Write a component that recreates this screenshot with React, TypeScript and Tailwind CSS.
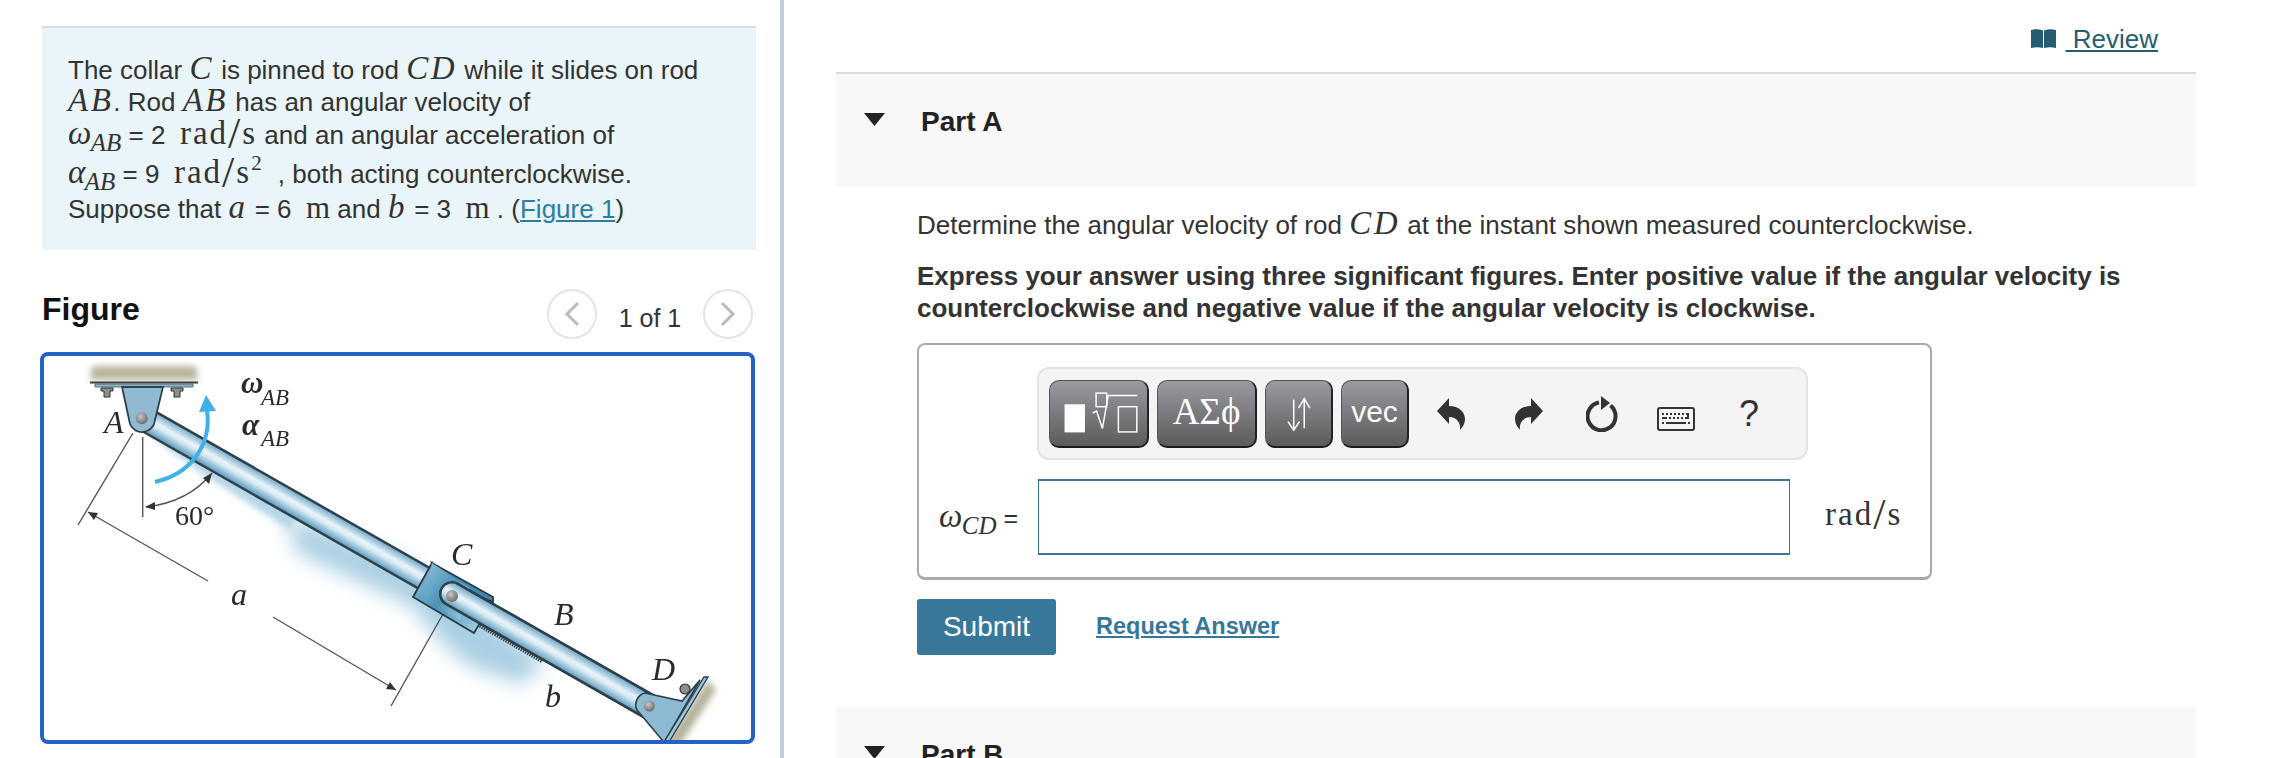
import React from 'react';

const sans = "font-['Liberation_Sans',Arial,sans-serif]";

function I({ children }: { children: React.ReactNode }) {
  return <span className="font-['Liberation_Serif',serif] italic text-[33px] tracking-[2.5px]">{children}</span>;
}

function Sub({ children }: { children: React.ReactNode }) {
  return <span className="font-['Liberation_Serif',serif] italic text-[25px] leading-[0] align-[-7px] -ml-[3px]">{children}</span>;
}

function Unit({ sup }: { sup?: boolean }) {
  return (
    <span className="font-['Liberation_Serif',serif] text-[33px] tracking-[2px]">
      rad<span className="text-[44px] font-light leading-[0] align-[-4px]">/</span>s
      {sup && <span className="text-[21px] leading-[0] align-[13px] mr-[7px]">2</span>}
    </span>
  );
}

function Triangle() {
  return (
    <svg width="21" height="13" viewBox="0 0 21 13" className="shrink-0">
      <path d="M0 0H21L10.5 13Z" fill="#222" />
    </svg>
  );
}

function PartHeader({ label, className }: { label: string; className: string }) {
  return (
    <div className={`bg-[#f8f8f8] flex items-start pl-[28px] ${className}`}>
      <div className="pt-[39px]"><Triangle /></div>
      <div className="ml-[36px] pt-[31px] text-[28px] leading-[34px] font-bold text-[#222]">{label}</div>
    </div>
  );
}

function Figure() {
  return (
    <svg width="707" height="384" viewBox="44 356 707 384" className="block">
      <defs>
        <linearGradient id="rod" gradientUnits="userSpaceOnUse" x1="401.2" y1="552.9" x2="390.8" y2="571.1">
          <stop offset="0" stop-color="#78aeca" />
          <stop offset="0.42" stop-color="#e8f4fa" />
          <stop offset="0.6" stop-color="#d6eaf4" />
          <stop offset="1" stop-color="#6ba3c3" />
        </linearGradient>
        <linearGradient id="collar" x1="0" y1="0" x2="1" y2="1">
          <stop offset="0" stop-color="#8fc3da" />
          <stop offset="0.5" stop-color="#4b93b6" />
          <stop offset="1" stop-color="#a9d2e4" />
        </linearGradient>
        <radialGradient id="pin" cx="0.4" cy="0.35" r="0.7">
          <stop offset="0" stop-color="#c8c8c8" />
          <stop offset="1" stop-color="#666" />
        </radialGradient>
        <filter id="soft" x="-30%" y="-30%" width="160%" height="160%"><feGaussianBlur stdDeviation="10" /></filter>
        <filter id="softer" x="-30%" y="-30%" width="160%" height="160%"><feGaussianBlur stdDeviation="3" /></filter>
        <filter id="ink" x="-5%" y="-5%" width="110%" height="110%"><feGaussianBlur stdDeviation="0.5" /></filter>
      </defs>

      {/* shadows */}
      <path d="M285 515L298 553L360 582L412 606L440 640L469 666L521 684L545 663L480 610L400 560Z" fill="#a9cfe2" filter="url(#soft)" />
      <path d="M150 436L200 472L290 530L300 510L200 450Z" fill="#b5d6e7" filter="url(#softer)" />
      <path d="M92 366H196L198 380H90Z" fill="#b9b59f" filter="url(#softer)" />
      <path d="M708 680L716 690L680 745L664 745Z" fill="#b4b29a" filter="url(#softer)" />

      <g filter="url(#ink)">
        {/* dimension lines */}
        <g stroke="#555" stroke-width="1.4" fill="none">
          <path d="M133 433L78 525" />
          <path d="M142.7 437V517" />
          <path d="M212 473C195 494 172 504 146 507" />
          <path d="M88 512L208 581" />
          <path d="M273 617L396 690" />
          <path d="M447 607L391 706" />
        </g>
        <path d="M145 507L155 502L155 510Z" fill="#333" />
        <path d="M212 473L203 478L209 484Z" fill="#333" />
        <path d="M88 512L98 513L94 520Z" fill="#333" />
        <path d="M396 690L386 689L390 682Z" fill="#333" />

        {/* rod A-D */}
        <path d="M141.7 417.3L649.3 706.6" stroke="#2f3f4b" stroke-width="26" fill="none" />
        <path d="M141.7 417.3L649.3 706.6" stroke="url(#rod)" stroke-width="21" fill="none" />

        {/* thread */}
        <path d="M480 625L543 661" stroke="#39444c" stroke-width="5" stroke-dasharray="1.5 1" fill="none" />

        {/* collar */}
        <path d="M432 563L493 597V602L440 580Z" fill="#3b89ae" stroke="#2b3a45" stroke-width="1.8" />
        <path d="M432 563L413 597L474 633L480 623L440 590Z" fill="url(#collar)" stroke="#2b3a45" stroke-width="1.8" />
        <path d="M432 563L470 588L460 620L424 600Z" fill="url(#collar)" />

        {/* rod C-D over the collar */}
        <path d="M452 594L649.3 706.6" stroke="#2f3f4b" stroke-width="26" stroke-linecap="round" fill="none" />
        <path d="M452 594L649.3 706.6" stroke="url(#rod)" stroke-width="21" stroke-linecap="round" fill="none" />
        <circle cx="452" cy="596" r="6" fill="url(#pin)" />

        {/* bracket at A */}
        <path d="M90 382.5H198" stroke="#3a3f42" stroke-width="2" />
        <path d="M95 384H193V387H95Z" fill="#8eb5c9" stroke="#455" stroke-width="0.8" />
        <path d="M101 388H113V391H110V397H104V391H101Z" fill="#8a8f90" stroke="#333" stroke-width="1" />
        <path d="M171 388H183V391H180V397H174V391H171Z" fill="#8a8f90" stroke="#333" stroke-width="1" />
        <path d="M122 387H163L155 420A13 13 0 0 1 130 424Z" fill="#8fbad2" stroke="#2f3f4b" stroke-width="1.8" />
        <circle cx="141.7" cy="418.3" r="6" fill="url(#pin)" />

        {/* bracket at D */}
        <path d="M645 693L682 701L700 680L665 741H663L637 710A12 12 0 0 1 645 693Z" fill="#8dbad3" stroke="#2f3f4b" stroke-width="1.6" />
        <path d="M704 677L708 677L669 742L664 742Z" fill="#9cc6dc" stroke="#2f3f4b" stroke-width="1.4" />
        <circle cx="685" cy="689" r="5" fill="#8a8f90" stroke="#333" stroke-width="1.2" />
        <circle cx="649.3" cy="706" r="5.5" fill="url(#pin)" />

        {/* rotation arrow */}
        <path d="M155 482C190 474 212 446 207 410" stroke="#3fb0e8" stroke-width="4" fill="none" />
        <path d="M206 395L216 411L199 412Z" fill="#3fb0e8" />

        {/* labels */}
        <g fill="#2a2a2a" font-family="'Liberation Serif', serif" font-style="italic">
          <text x="241" y="393" font-size="31" font-weight="bold">ω</text>
          <text x="261" y="405" font-size="23">AB</text>
          <text x="242" y="435" font-size="31" font-weight="bold">α</text>
          <text x="261" y="446" font-size="23">AB</text>
          <text x="104" y="433" font-size="32">A</text>
          <text x="231" y="605" font-size="32">a</text>
          <text x="451" y="565" font-size="32">C</text>
          <text x="554" y="625" font-size="32">B</text>
          <text x="652" y="680" font-size="32">D</text>
          <text x="545" y="707" font-size="32">b</text>
        </g>
        <text x="175" y="525" font-size="28" fill="#2a2a2a" font-family="'Liberation Serif', serif">60°</text>
      </g>
    </svg>
  );
}

function Sqrt() {
  return (
    <svg width="100" height="68" viewBox="0 0 100 68">
      <rect x="15" y="25" width="21" height="29" fill="#fff" />
      <rect x="47.5" y="13.5" width="11" height="14" fill="none" stroke="#fff" stroke-width="1.5" />
      <path d="M44 34L48 32L54 50L60 16H90" fill="none" stroke="#fff" stroke-width="1.5" />
      <rect x="70.5" y="27.5" width="19" height="26" fill="none" stroke="#fff" stroke-width="1.5" />
    </svg>
  );
}

function Arrows() {
  return (
    <svg width="68" height="68" viewBox="0 0 68 68">
      <path d="M29 20V50M23 43L29 52L35 43" fill="none" stroke="#fff" stroke-width="1.6" />
      <path d="M40 50V20M34 29L40 19L46 29" fill="none" stroke="#fff" stroke-width="1.6" />
    </svg>
  );
}

function TexButton({ width, children }: { width: string; children: React.ReactNode }) {
  return (
    <div className={`${width} h-[68px] rounded-[10px] flex items-center justify-center bg-gradient-to-b from-[#9b9aa2] to-[#5c5c5c] border border-[#555] border-b-2 border-r-2 border-b-[#1c1c1c] border-r-[#222]`}>
      {children}
    </div>
  );
}

function Undo({ flip }: { flip?: boolean }) {
  return (
    <svg width="28" height="32" viewBox="0 0 28 32" className={flip ? '-scale-x-100' : ''}>
      <path d="M0 13L12 0V8C22 8 28 14 28 21C28 25 26 29 23 32C24 25 20 19 12 19V26Z" fill="#333" />
    </svg>
  );
}

function Reset() {
  return (
    <svg width="32" height="36" viewBox="0 0 32 36">
      <path d="M24.5 9.5A14 14 0 1 1 13 6.5" fill="none" stroke="#333" stroke-width="4" />
      <path d="M15 0L24 7L15 14Z" fill="#333" />
    </svg>
  );
}

function Keyboard() {
  const dots = [
    'M5 6h2v2H5zM9 6h2v2H9zM13 6h2v2h-2zM17 6h2v2h-2zM21 6h2v2h-2zM25 6h2v2h-2zM29 6h3v2h-3z',
    'M5 10h5v2H5zM12 10h2v2h-2zM16 10h2v2h-2zM20 10h2v2h-2zM24 10h2v2h-2zM28 10h4v2h-4zM30 8h2v4h-2z',
    'M5 15h2v2H5zM9 15h20v2H9zM31 15h2v2h-2z',
  ];
  return (
    <svg width="38" height="24" viewBox="0 0 38 24">
      <rect x="1" y="1" width="36" height="22" rx="2" fill="none" stroke="#333" stroke-width="2" />
      {dots.map((d) => <path key={d} d={d} fill="#333" />)}
    </svg>
  );
}

export default function App() {
  return (
    <div className={`${sans} w-[2270px] h-[758px] overflow-hidden bg-white flex text-[#333]`}>
      {/* left column */}
      <div className="w-[784px] shrink-0 h-full flex flex-col pl-[42px] pt-[26px] pr-[24px] border-r-4 border-[#c2cede]">
        <div className="h-[224px] shrink-0 bg-[#e9f5f8] border-t-2 border-[#ddd] pl-[26px] pt-[24px] text-[26px] leading-[32px]">
          <div className="h-[32px] whitespace-nowrap">The collar <I>C</I> is pinned to rod <I>CD</I> while it slides on rod</div>
          <div className="h-[33px] whitespace-nowrap"><I>AB</I>. Rod <I>AB</I> has an angular velocity of</div>
          <div className="h-[39px] whitespace-nowrap"><I>ω</I><Sub>AB</Sub> = 2 &nbsp;<Unit /> and an angular acceleration of</div>
          <div className="h-[35px] whitespace-nowrap"><I>α</I><Sub>AB</Sub> = 9 &nbsp;<Unit sup /> , both acting counterclockwise.</div>
          <div className="h-[35px] whitespace-nowrap">
            Suppose that <I>a</I> = 6 &nbsp;<span className="font-['Liberation_Serif',serif] text-[31px]">m</span> and <I>b</I> = 3 &nbsp;<span className="font-['Liberation_Serif',serif] text-[31px]">m</span> . (<span className="text-[#2d7da3] underline">Figure 1</span>)
          </div>
        </div>

        <div className="h-[102px] shrink-0 flex items-start justify-between pt-[39px] pr-[3px]">
          <div className="text-[32px] leading-[38px] font-bold text-[#111] mt-[1px]">Figure</div>
          <div className="flex items-center">
            <div className="w-[50px] h-[50px] rounded-full border-2 border-[#e4e4e4] flex items-center justify-center">
              <svg width="16" height="26" viewBox="0 0 16 26"><path d="M14 2L3 13L14 24" fill="none" stroke="#bbb" stroke-width="3" /></svg>
            </div>
            <div className="w-[106px] text-center text-[25px] mt-[9px]">1 of 1</div>
            <div className="w-[50px] h-[50px] rounded-full border-2 border-[#e4e4e4] flex items-center justify-center">
              <svg width="16" height="26" viewBox="0 0 16 26"><path d="M2 2L13 13L2 24" fill="none" stroke="#bbb" stroke-width="3" /></svg>
            </div>
          </div>
        </div>

        <div className="w-[715px] h-[392px] border-4 border-[#2361c3] rounded-[8px] -ml-[2px] overflow-hidden shrink-0">
          <Figure />
        </div>
      </div>

      {/* right column */}
      <div className="flex-1 min-w-0 pl-[52px] pr-[74px]">
        <div className="h-[72px] flex justify-end pr-[38px] pt-[24px]">
          <div className="flex items-start text-[#255c72]">
            <svg width="25" height="20" viewBox="0 0 25 20" className="mt-[5px]">
              <path d="M0 1C4 0 8 0 12 1.5V19C8 18 4 18 0 19Z" fill="#255c72" />
              <path d="M25 1C21 0 17 0 13 1.5V19C17 18 21 18 25 19Z" fill="#255c72" />
            </svg>
            <span className="ml-[10px] text-[26px] leading-[30px] underline whitespace-pre"> Review</span>
          </div>
        </div>

        <div className="border-t-2 border-[#ddd]">
          <PartHeader label="Part A" className="h-[113px]" />
        </div>

        <div className="pl-[81px]">
          <div className="pt-[20px] h-[63px] text-[26px] leading-[32px] whitespace-nowrap">
            Determine the angular velocity of rod <I>CD</I> at the instant shown measured counterclockwise.
          </div>
          <div className="mt-[10px] text-[26px] leading-[32px] font-bold whitespace-nowrap">
            <div>Express your answer using three significant figures. Enter positive value if the angular velocity is</div>
            <div>counterclockwise and negative value if the angular velocity is clockwise.</div>
          </div>

          <div className="mt-[19px] w-[1015px] h-[237px] border-2 border-b-[3px] border-[#aaa] rounded-[8px] flex flex-col">
            <div className="ml-[118px] mt-[22px] w-[771px] h-[93px] bg-[#f4f4f4] border-2 border-[#e4e4e4] rounded-[12px] flex items-center pl-[10px] text-[#333]">
              <TexButton width="w-[100px]"><Sqrt /></TexButton>
              <TexButton width="w-[100px] ml-[8px]">
                <span className="font-['Liberation_Serif',serif] text-[37px] text-white -mt-[2px]">ΑΣϕ</span>
              </TexButton>
              <TexButton width="w-[68px] ml-[8px]"><Arrows /></TexButton>
              <TexButton width="w-[68px] ml-[8px]"><span className="text-[30px] text-white -mt-[4px]">vec</span></TexButton>
              <div className="ml-[28px] flex items-center"><Undo /></div>
              <div className="ml-[50px] flex items-center"><Undo flip /></div>
              <div className="ml-[43px] flex items-center"><Reset /></div>
              <div className="ml-[39px] flex items-center mt-[10px]"><Keyboard /></div>
              <div className="ml-[44px] text-[36px] leading-none">?</div>
            </div>
            <div className="mt-[19px] flex items-center pl-[20px]">
              <div className="w-[99px] whitespace-nowrap text-[25px] leading-[32px]"><I>ω</I><Sub>CD</Sub> =</div>
              <div className="w-[752px] h-[76px] border-2 border-x-[1.5px] border-[#37789a] bg-white" />
              <div className="ml-[35px] leading-[32px]"><Unit /></div>
            </div>
          </div>

          <div className="mt-[19px] flex items-center">
            <div className="w-[139px] h-[56px] bg-[#37789a] rounded-[3px] flex items-center justify-center text-white text-[28px]">Submit</div>
            <div className="ml-[40px] text-[23.5px] font-bold text-[#37789a] underline">Request Answer</div>
          </div>
        </div>

        <PartHeader label="Part B" className="mt-[52px] h-[113px]" />
      </div>
    </div>
  );
}
